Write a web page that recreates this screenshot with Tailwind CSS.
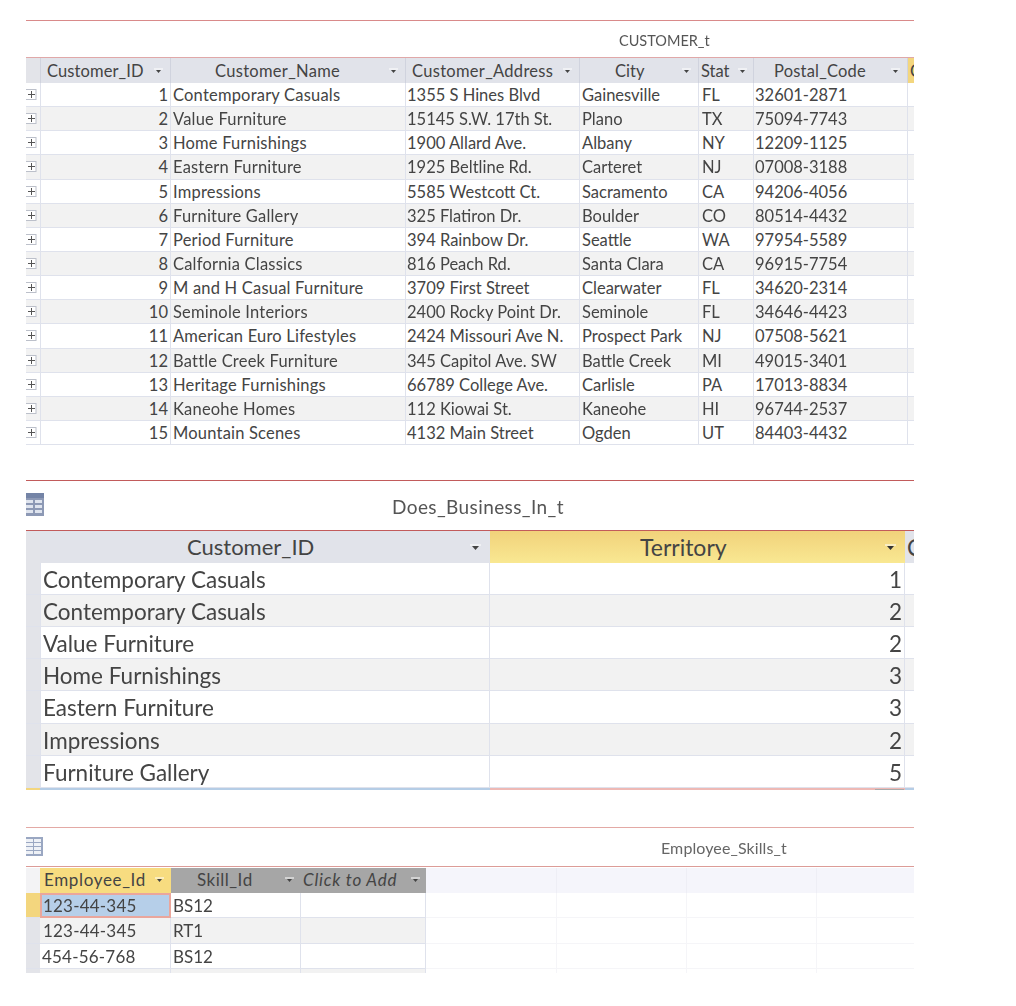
<!DOCTYPE html>
<html lang="en">
<head>
  <meta charset="UTF-8">
  <title>Access tables</title>
  <script src="https://cdn.jsdelivr.net/npm/@tailwindcss/browser@4"></script>
</head>
<body class="bg-white text-[#444] font-['Lato','Open_Sans',sans-serif]">
<div class="w-[888px] ml-[26px] pt-[20px] h-[1006px] overflow-hidden blur-[0.4px]">

  <!-- CUSTOMER_t -->
  <section class="border-t border-[#d98a8a]">
    <div class="h-[36px] pl-[593px] pt-[11px] text-[14.500px] leading-[18px] text-[#555]">CUSTOMER_t</div>
    <div id="customers" class="border-t border-[#e0a8a8] grid grid-cols-[15px_130px_235px_174px_119px_55px_154px_6px] grid-rows-[25px] auto-rows-[24.150px] text-[16.500px] leading-[24px] overflow-hidden">
      <div class="bg-[#e3e4e9] border-r border-[#d0d3de]"></div>
      <div class="bg-[#e1e3ea] border-r border-[#d0d3de] flex items-center pl-[6px] tracking-[0.1px]">Customer_ID<svg class="ml-auto mr-[7px]" width="9" height="6" viewBox="0 0 9 6"><path d="M0 1h9" stroke="#fff"/><path d="M2 2h5L4.500 5z" fill="#444"/></svg></div>
      <div class="bg-[#e1e3ea] border-r border-[#d0d3de] flex items-center pl-[44px] tracking-[0.3px]">Customer_Name<svg class="ml-auto mr-[7px]" width="9" height="6" viewBox="0 0 9 6"><path d="M0 1h9" stroke="#fff"/><path d="M2 2h5L4.500 5z" fill="#444"/></svg></div>
      <div class="bg-[#e1e3ea] border-r border-[#d0d3de] flex items-center pl-[6px] tracking-[0.3px]">Customer_Address<svg class="ml-auto mr-[7px]" width="9" height="6" viewBox="0 0 9 6"><path d="M0 1h9" stroke="#fff"/><path d="M2 2h5L4.500 5z" fill="#444"/></svg></div>
      <div class="bg-[#e1e3ea] border-r border-[#d0d3de] flex items-center pl-[35px]">City<svg class="ml-auto mr-[7px]" width="9" height="6" viewBox="0 0 9 6"><path d="M0 1h9" stroke="#fff"/><path d="M2 2h5L4.500 5z" fill="#444"/></svg></div>
      <div class="bg-[#e1e3ea] border-r border-[#d0d3de] flex items-center pl-[2px] overflow-hidden">Stat<svg class="ml-auto mr-[6px]" width="9" height="6" viewBox="0 0 9 6"><path d="M0 1h9" stroke="#fff"/><path d="M2 2h5L4.500 5z" fill="#444"/></svg></div>
      <div class="bg-[#e1e3ea] border-r border-[#d0d3de] flex items-center pl-[20px] tracking-[0.2px]">Postal_Code<svg class="ml-auto mr-[7px]" width="9" height="6" viewBox="0 0 9 6"><path d="M0 1h9" stroke="#fff"/><path d="M2 2h5L4.500 5z" fill="#444"/></svg></div>
      <div class="bg-[#f3d67e] overflow-hidden pl-[2px] flex items-center">C</div>
    </div>
  </section>

  <!-- Does_Business_In_t -->
  <section class="mt-[35px] border-t border-[#c25b5b]">
    <div class="h-[49px] relative">
      <svg class="absolute left-0 top-[12px]" width="18" height="23" viewBox="0 0 18 23"><rect width="18" height="23" fill="#8d99b5"/><rect y="0" width="18" height="5" fill="#7484a6"/><path d="M0 7h7v3H0zM9 7h7v3H9zM0 12h7v3H0zM9 12h7v3H9zM0 17h7v3H0zM9 17h7v3H9z" fill="#dfe4ee"/></svg>
      <div class="pl-[366px] pt-[14px] text-[19px] leading-[24px] text-[#555] tracking-[0.4px]">Does_Business_In_t</div>
    </div>
    <div id="business" class="border-t border-[#c25b5b] grid grid-cols-[14px_450px_415px_9px] grid-rows-[32px] auto-rows-[32.100px] text-[22.500px] leading-[30px] overflow-hidden">
      <div class="bg-[#e3e4e9]"></div>
      <div class="bg-[#e1e3ea] flex items-center pl-[147px] text-[22px]">Customer_ID<svg class="ml-auto mr-[9px]" width="11" height="7" viewBox="0 0 11 7"><path d="M0 1h11" stroke="#fff"/><path d="M2 2h7L5.500 6z" fill="#444"/></svg></div>
      <div class="bg-gradient-to-b from-[#f1d27b] to-[#f9e892] flex items-center pl-[150px] text-[23px]">Territory<svg class="ml-auto mr-[9px]" width="11" height="7" viewBox="0 0 11 7"><path d="M0 1h11" stroke="#fff"/><path d="M2 2h7L5.500 6z" fill="#333"/></svg></div>
      <div class="bg-[#e1e3ea] overflow-hidden pl-[2px] flex items-center text-[23px]">C</div>
    </div>
    <!-- bottom edge of the window under the rows -->
    <div class="relative flex h-[2px]">
      <div class="w-[14px] bg-[#f3d67e]"></div>
      <div class="w-[450px] bg-[#b5cde6]"></div>
      <div class="w-[415px] bg-[#eeb9b5]"></div>
      <div class="w-[9px] bg-[#b5cde6]"></div>
      <div class="absolute left-[849px] top-[1px] w-[29px] h-[1px] bg-[#aaa]"></div>
    </div>
  </section>

  <!-- Employee_Skills_t -->
  <section class="mt-[37px] border-t border-[#e3a9a5]">
    <div class="h-[38px] relative">
      <svg class="absolute left-0 top-[9px]" width="17" height="19" viewBox="0 0 17 19"><rect width="17" height="19" fill="#9aa7c2"/><path d="M0 2h7v3H0zM8 2h7v3H8zM0 6h7v3H0zM8 6h7v3H8zM0 10h7v3H0zM8 10h7v3H8zM0 14h7v3H0zM8 14h7v3H8z" fill="#eef1f6"/></svg>
      <div class="pl-[635px] pt-[10px] text-[16px] leading-[20px] text-[#666] tracking-[0.1px]">Employee_Skills_t</div>
    </div>
    <div class="border-t border-[#dc9c98] pt-[1px] h-[107px] overflow-hidden">
      <div class="grid grid-cols-[14px_131px_130px_125px_131px_130px_130px_97px] text-[17px] leading-[24px]">
        <div class="h-[25px] bg-[#f3f3f5]"></div>
        <div class="h-[25px] bg-[#f7dc80] flex items-center pl-[4px] tracking-[0.65px]">Employee_Id<svg class="ml-auto mr-[7px] shrink-0" width="9" height="6" viewBox="0 0 9 6"><path d="M0 1h9" stroke="#fff"/><path d="M2 2h5L4.500 5z" fill="#444"/></svg></div>
        <div class="h-[25px] bg-[#a6a6a6] flex items-center pl-[26px] tracking-[0.5px]">Skill_Id<svg class="ml-auto mr-[7px]" width="9" height="6" viewBox="0 0 9 6"><path d="M0 1h9" stroke="#fff"/><path d="M2 2h5L4.500 5z" fill="#444"/></svg></div>
        <div class="h-[25px] bg-[#a6a6a6] flex items-center pl-[2px] italic tracking-[0.8px]">Click to Add<svg class="ml-auto mr-[6px]" width="9" height="6" viewBox="0 0 9 6"><path d="M0 1h9" stroke="#fff"/><path d="M2 2h5L4.500 5z" fill="#444"/></svg></div>
        <div class="h-[25px] bg-[#f5f5fb] border-r border-[#eeeef5]"></div>
        <div class="h-[25px] bg-[#f5f5fb] border-r border-[#eeeef5]"></div>
        <div class="h-[25px] bg-[#f5f5fb] border-r border-[#eeeef5]"></div>
        <div class="h-[25px] bg-[#f5f5fb]"></div>

        <div class="h-[25.500px] bg-[#f3d67e] border-b border-[#dfe2ec]"></div>
        <div class="h-[25.500px] bg-[#b6cfe9] border-2 border-[#eaa69c] pl-[1px] pt-[1px] flex items-center tracking-[0.2px]">123-44-345</div>
        <div class="h-[25.500px] border-r border-b border-[#dfe2ec] pl-[2px] pt-[1px] flex items-center">BS12</div>
        <div class="h-[25.500px] border-r border-b border-[#dfe2ec]"></div>
        <div class="h-[25.500px] border-r border-b border-[#f5f5f8]"></div>
        <div class="h-[25.500px] border-r border-b border-[#f5f5f8]"></div>
        <div class="h-[25.500px] border-r border-b border-[#f5f5f8]"></div>
        <div class="h-[25.500px] border-b border-[#f5f5f8]"></div>

        <div class="h-[25.500px] bg-[#e3e4e9] border-b border-[#dfe2ec]"></div>
        <div class="h-[25.500px] bg-[#f2f2f2] border-r border-b border-[#dfe2ec] pl-[3px] pt-[1px] flex items-center tracking-[0.2px]">123-44-345</div>
        <div class="h-[25.500px] bg-[#f2f2f2] border-r border-b border-[#dfe2ec] pl-[2px] pt-[1px] flex items-center">RT1</div>
        <div class="h-[25.500px] bg-[#f2f2f2] border-r border-b border-[#dfe2ec]"></div>
        <div class="h-[25.500px] border-r border-b border-[#f5f5f8]"></div>
        <div class="h-[25.500px] border-r border-b border-[#f5f5f8]"></div>
        <div class="h-[25.500px] border-r border-b border-[#f5f5f8]"></div>
        <div class="h-[25.500px] border-b border-[#f5f5f8]"></div>

        <div class="h-[25.500px] bg-[#e3e4e9] border-b border-[#dfe2ec]"></div>
        <div class="h-[25.500px] border-r border-b border-[#dfe2ec] pl-[2px] pt-[1px] flex items-center tracking-[0.2px]">454-56-768</div>
        <div class="h-[25.500px] border-r border-b border-[#dfe2ec] pl-[2px] pt-[1px] flex items-center">BS12</div>
        <div class="h-[25.500px] border-r border-b border-[#dfe2ec]"></div>
        <div class="h-[25.500px] border-r border-b border-[#f5f5f8]"></div>
        <div class="h-[25.500px] border-r border-b border-[#f5f5f8]"></div>
        <div class="h-[25.500px] border-r border-b border-[#f5f5f8]"></div>
        <div class="h-[25.500px] border-b border-[#f5f5f8]"></div>

        <div class="h-[6px] bg-[#e3e4e9]"></div>
        <div class="h-[6px] bg-[#f2f2f2] border-r border-[#dfe2ec]"></div>
        <div class="h-[6px] bg-[#f2f2f2] border-r border-[#dfe2ec]"></div>
        <div class="h-[6px] bg-[#f2f2f2] border-r border-[#dfe2ec]"></div>
        <div class="h-[6px] border-r border-[#f5f5f8]"></div>
        <div class="h-[6px] border-r border-[#f5f5f8]"></div>
        <div class="h-[6px] border-r border-[#f5f5f8]"></div>
        <div class="h-[6px]"></div>
      </div>
    </div>
  </section>
</div>

<script>
  const customers = [
    [1, 'Contemporary Casuals', '1355 S Hines Blvd', 'Gainesville', 'FL', '32601-2871'],
    [2, 'Value Furniture', '15145 S.W. 17th St.', 'Plano', 'TX', '75094-7743'],
    [3, 'Home Furnishings', '1900 Allard Ave.', 'Albany', 'NY', '12209-1125'],
    [4, 'Eastern Furniture', '1925 Beltline Rd.', 'Carteret', 'NJ', '07008-3188'],
    [5, 'Impressions', '5585 Westcott Ct.', 'Sacramento', 'CA', '94206-4056'],
    [6, 'Furniture Gallery', '325 Flatiron Dr.', 'Boulder', 'CO', '80514-4432'],
    [7, 'Period Furniture', '394 Rainbow Dr.', 'Seattle', 'WA', '97954-5589'],
    [8, 'Calfornia Classics', '816 Peach Rd.', 'Santa Clara', 'CA', '96915-7754'],
    [9, 'M and H Casual Furniture', '3709 First Street', 'Clearwater', 'FL', '34620-2314'],
    [10, 'Seminole Interiors', '2400 Rocky Point Dr.', 'Seminole', 'FL', '34646-4423'],
    [11, 'American Euro Lifestyles', '2424 Missouri Ave N.', 'Prospect Park', 'NJ', '07508-5621'],
    [12, 'Battle Creek Furniture', '345 Capitol Ave. SW', 'Battle Creek', 'MI', '49015-3401'],
    [13, 'Heritage Furnishings', '66789 College Ave.', 'Carlisle', 'PA', '17013-8834'],
    [14, 'Kaneohe Homes', '112 Kiowai St.', 'Kaneohe', 'HI', '96744-2537'],
    [15, 'Mountain Scenes', '4132 Main Street', 'Ogden', 'UT', '84403-4432']
  ];

  const plusIcon = '<svg width="11" height="11" viewBox="0 0 11 11"><rect x="-1" y="0.5" width="11" height="10" fill="#fff" stroke="#bcc0ca"/><path d="M2 5.500h7M5.500 2v7" stroke="#555"/></svg>';

  // Customer rows
  let html = '';
  customers.forEach((c, i) => {
    const bg = i % 2 ? 'bg-[#f2f2f2]' : 'bg-white';
    const cell = `${bg} border-r border-b border-[#dfe2ec] whitespace-nowrap overflow-hidden`;
    html += `
      <div class="${bg} border-r border-b border-[#dfe2ec] flex items-center">${plusIcon}</div>
      <div class="${bg} border-r border-b border-[#dfe2ec] text-right pr-[2px]">${c[0]}</div>
      <div class="${cell} pl-[2px] tracking-[0.2px]">${c[1]}</div>
      <div class="${cell} pl-[1px]">${c[2]}</div>
      <div class="${cell} pl-[2px]">${c[3]}</div>
      <div class="${cell} pl-[3px]">${c[4]}</div>
      <div class="${cell} pl-[1px]">${c[5]}</div>
      <div class="${bg} border-b border-[#dfe2ec]"></div>`;
  });
  document.getElementById('customers').insertAdjacentHTML('beforeend', html);

  // Does_Business_In rows
  const business = [
    ['Contemporary Casuals', 1], ['Contemporary Casuals', 2], ['Value Furniture', 2],
    ['Home Furnishings', 3], ['Eastern Furniture', 3], ['Impressions', 2], ['Furniture Gallery', 5]
  ];
  html = '';
  business.forEach((b, i) => {
    const bg = i % 2 ? 'bg-[#f2f2f2]' : 'bg-white';
    html += `
      <div class="bg-[#e3e4e9] border-b border-[#dfe2ec]"></div>
      <div class="${bg} border-l border-r border-b border-[#dfe2ec] pl-[2px] pt-[2px]">${b[0]}</div>
      <div class="${bg} border-r border-b border-[#dfe2ec] text-right pr-[2px] pt-[2px]">${b[1]}</div>
      <div class="${bg} border-b border-[#dfe2ec]"></div>`;
  });
  document.getElementById('business').insertAdjacentHTML('beforeend', html);
</script>
</body>
</html>
